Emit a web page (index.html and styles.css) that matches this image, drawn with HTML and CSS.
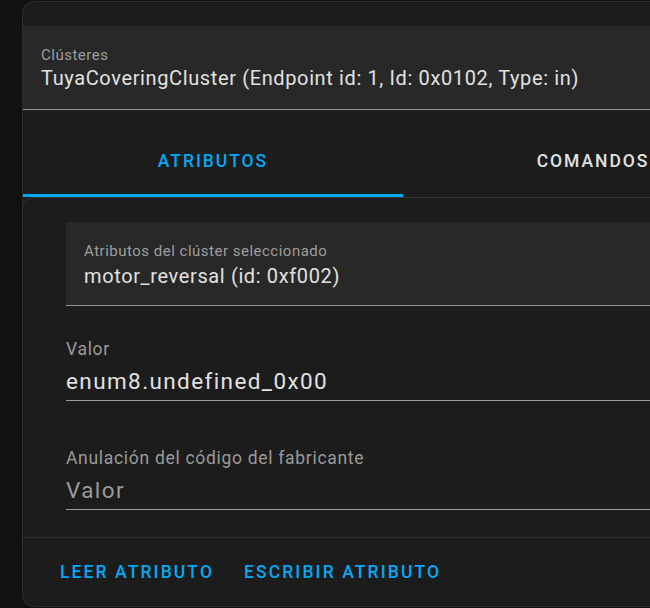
FILE: index.html
```html
<!DOCTYPE html>
<html lang="es">
<head>
<meta charset="utf-8">
<title>Clúster</title>
<link rel="stylesheet" href="styles.css">
</head>
<body>
<div class="card">
  <div class="select first">
    <div class="select-label">Clústeres</div>
    <div class="select-value">TuyaCoveringCluster (Endpoint id: 1, Id: 0x0102, Type: in)</div>
  </div>
  <div class="tabs">
    <div class="tab active">ATRIBUTOS</div>
    <div class="tab">COMANDOS</div>
  </div>
  <div class="panel">
    <div class="panel-content">
      <div class="select second">
        <div class="select-label">Atributos del clúster seleccionado</div>
        <div class="select-value">motor_reversal (id: 0xf002)</div>
      </div>
      <div class="field field-value">
        <div class="field-label">Valor</div>
        <div class="field-input">enum8.undefined_0x00</div>
      </div>
      <div class="field field-override">
        <div class="field-label">Anulación del código del fabricante</div>
        <div class="field-input placeholder">Valor</div>
      </div>
    </div>
    <div class="actions">
      <span class="btn">LEER ATRIBUTO</span>
      <span class="btn">ESCRIBIR ATRIBUTO</span>
    </div>
  </div>
</div>
</body>
</html>
```

FILE: styles.css
```css
html, body {
  margin: 0;
  padding: 0;
}
body {
  width: 650px;
  height: 608px;
  overflow: hidden;
  background: #111111;
  font-family: Roboto, "Noto Sans", sans-serif;
  color: #e1e1e1;
}
.card {
  box-sizing: border-box;
  margin: 1px 0 0 22px;
  width: 1000px;
  height: 606px;
  border: 1px solid #2e2e2e;
  border-radius: 12px;
  background: #1c1c1c;
  display: flex;
  flex-direction: column;
}
.select {
  box-sizing: border-box;
  height: 84px;
  background: #282828;
  border-bottom: 1px solid #959595;
  padding: 19px 0 0 18px;
}
.select.first {
  margin-top: 24px;
}
.select-label {
  font-size: 15px;
  line-height: 20px;
  letter-spacing: 0.5px;
  color: #9e9e9e;
}
.select-value {
  font-size: 20px;
  line-height: 24px;
  letter-spacing: 0.625px;
  margin-top: 1px;
  color: #e1e1e1;
  white-space: nowrap;
}
.select.second {
  margin-top: 24px;
}
.select.second .select-value {
  margin-top: 3px;
}
.tabs {
  display: flex;
  height: 87px;
}
.tab {
  box-sizing: border-box;
  width: 380px;
  height: 87px;
  padding-top: 41px;
  text-align: center;
  font-size: 17.5px;
  line-height: 20px;
  font-weight: 500;
  letter-spacing: 1.95px;
  color: #e1e1e1;
  white-space: nowrap;
}
.tab.active {
  color: #03a9f4;
  border-bottom: 3px solid #03a9f4;
}
.panel {
  flex: 1;
  margin: 0 0 -1px -1px;
  border-top: 1px solid #363636;
  border-left: 1px solid #2e2e2e;
  border-bottom: 1px solid #2e2e2e;
  border-radius: 12px 0 0 12px;
  background: #1c1c1c;
  display: flex;
  flex-direction: column;
}
.panel-content {
  padding: 0 0 27px 43px;
}
.field {
  border-bottom: 1px solid #9a9a9a;
  padding-bottom: 5px;
}
.field-value {
  margin-top: 32px;
}
.field-override {
  margin-top: 46px;
}
.field-label {
  font-size: 17.5px;
  line-height: 22px;
  letter-spacing: 0.7px;
  color: #9a9a9a;
}
.field-input {
  font-size: 22.5px;
  line-height: 28px;
  margin-top: 7px;
  letter-spacing: 1.4px;
  color: #e1e1e1;
}
.field-input.placeholder {
  color: #9a9a9a;
}
.actions {
  border-top: 1px solid #2e2e2e;
  padding: 24px 0 0 37px;
  display: flex;
  gap: 30px;
}
.btn {
  font-size: 17.5px;
  line-height: 20px;
  font-weight: 500;
  letter-spacing: 2.1px;
  color: #03a9f4;
}
```
